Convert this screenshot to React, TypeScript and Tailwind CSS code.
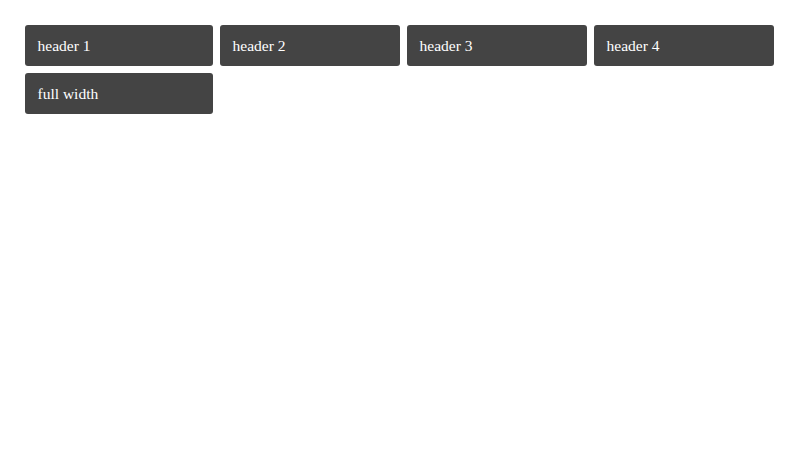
export default function App() {
  const cells = ['header 1', 'header 2', 'header 3', 'header 4', 'full width'];

  return (
    <div className="min-h-[450px] bg-white p-[25px] font-['Liberation_Serif',serif]">
      <div className="grid grid-cols-[188px_180px_180px_180px] gap-[7px]">
        {cells.map((label) => (
          <div
            key={label}
            className="flex h-[41px] items-center rounded-[3px] bg-[#444444] pl-[12.5px] text-[15.5px] text-white"
          >
            {label}
          </div>
        ))}
      </div>
    </div>
  );
}
